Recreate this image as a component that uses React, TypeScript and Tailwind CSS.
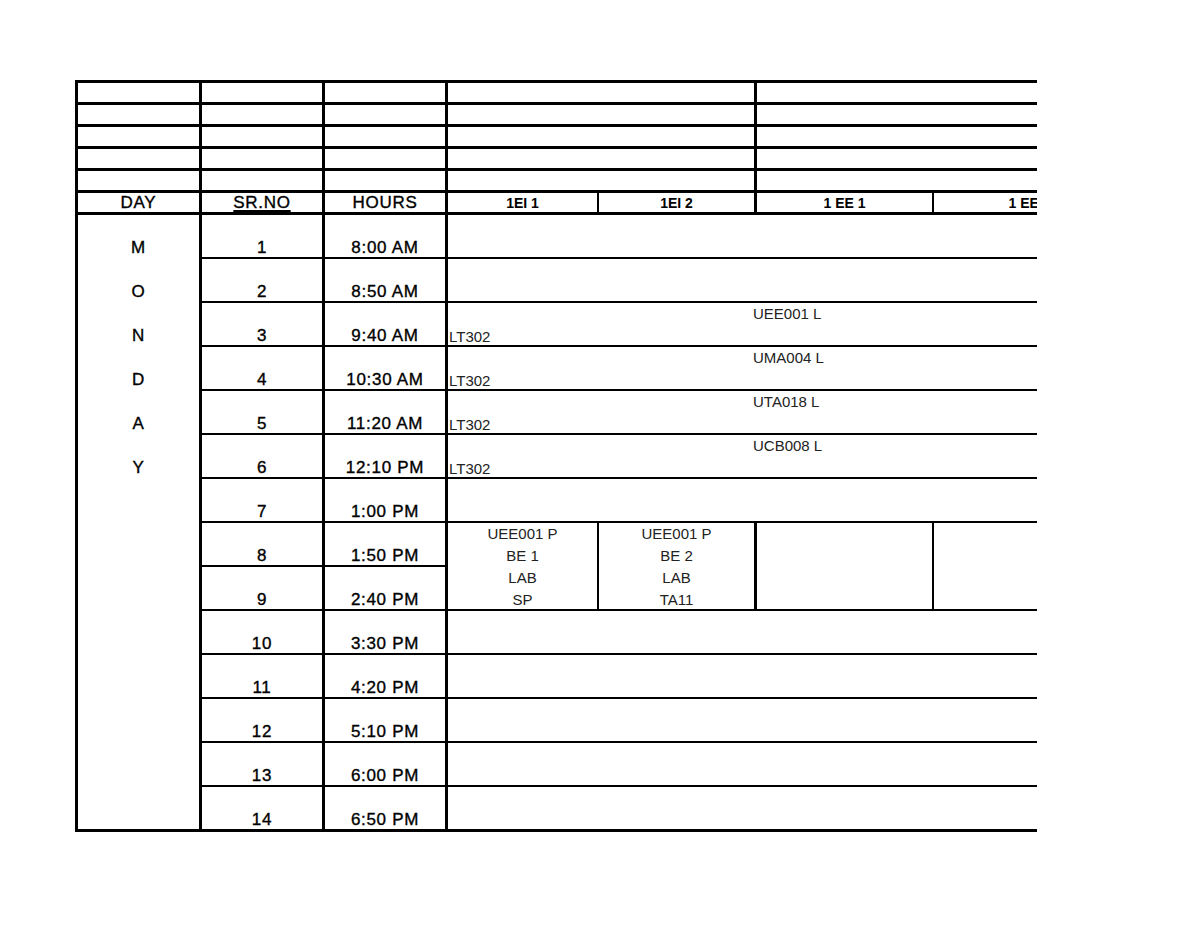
const font = "font-['Liberation_Sans',Arial,sans-serif]"

const slots = [
  { no: "1", time: "8:00 AM" },
  { no: "2", time: "8:50 AM" },
  { no: "3", time: "9:40 AM", course: "UEE001 L", room: "LT302" },
  { no: "4", time: "10:30 AM", course: "UMA004 L", room: "LT302" },
  { no: "5", time: "11:20 AM", course: "UTA018 L", room: "LT302" },
  { no: "6", time: "12:10 PM", course: "UCB008 L", room: "LT302" },
  { no: "7", time: "1:00 PM" },
  { no: "8", time: "1:50 PM", lab: true },
  { no: "9", time: "2:40 PM" },
  { no: "10", time: "3:30 PM" },
  { no: "11", time: "4:20 PM" },
  { no: "12", time: "5:10 PM" },
  { no: "13", time: "6:00 PM" },
  { no: "14", time: "6:50 PM" },
]

const labs = [
  ["UEE001 P", "BE 1", "LAB", "SP"],
  ["UEE001 P", "BE 2", "LAB", "TA11"],
  [],
  [],
]

// heavier, slightly wider look for the main sheet text
const strong = "tracking-[0.7px] [-webkit-text-stroke:0.35px_black]"

function LabCell({ lines, edge }: { lines: string[]; edge: string }) {
  return (
    <div className={`row-span-2 border-b-2 border-black ${edge} flex flex-col items-center text-[15px] leading-[22px] text-[#222]`}>
      {lines.map((l, i) => (
        <span key={i}>{l}</span>
      ))}
    </div>
  )
}

export default function App() {
  return (
    <div className={`min-h-[927px] w-[1200px] bg-white pt-[80px] pl-[75px] text-black ${font}`}>
      <div className="w-[962px] overflow-hidden">
        <div className="grid w-[1056px] grid-cols-[124px_123px_123px_151px_158px_177px_194px] grid-rows-[repeat(6,22px)_repeat(13,44px)_45px] border-l-[3px] border-t-[3px] border-black">
          {/* blank title rows */}
          {[0, 1, 2, 3, 4].map((r) => (
            <div key={r} className="contents">
              <div className="border-b-[3px] border-r-[3px] border-black" />
              <div className="border-b-[3px] border-r-[3px] border-black" />
              <div className="border-b-[3px] border-r-[3px] border-black" />
              <div className="col-span-2 border-b-[3px] border-r-[3px] border-black" />
              <div className="col-span-2 border-b-[3px] border-r-[3px] border-black" />
            </div>
          ))}

          {/* column heads */}
          <div className={`flex items-end justify-center border-b-[3px] border-r-[3px] border-black text-[17px] leading-[18px] ${strong}`}>DAY</div>
          <div className={`flex items-end justify-center border-b-[3px] border-r-[3px] border-black text-[17px] leading-[18px] ${strong}`}>
            <span className="underline decoration-2 underline-offset-[2px]">SR.NO</span>
          </div>
          <div className={`flex items-end justify-center border-b-[3px] border-r-[3px] border-black text-[17px] leading-[18px] ${strong}`}>HOURS</div>
          <div className="flex items-center justify-center border-b-[3px] border-r-2 border-black pt-[2px] text-[14px] font-bold">1EI 1</div>
          <div className="flex items-center justify-center border-b-[3px] border-r-[3px] border-black pt-[2px] text-[14px] font-bold">1EI 2</div>
          <div className="flex items-center justify-center border-b-[3px] border-r-2 border-black pt-[2px] text-[14px] font-bold">1 EE 1</div>
          <div className="flex items-center justify-center border-b-[3px] border-r-[3px] border-black pt-[2px] text-[14px] font-bold">1 EE 2</div>

          {slots.map((s, i) => {
            const last = i === slots.length - 1
            const bottom = last ? "border-b-[3px]" : "border-b-2"
            return (
              <div key={s.no} className="contents">
                {i === 0 && (
                  <div className="row-span-14 flex flex-col border-b-[3px] border-r-[3px] border-black">
                    {["M", "O", "N", "D", "A", "Y"].map((d) => (
                      <div key={d} className={`flex h-[44px] items-end justify-center pb-[1px] text-[17px] leading-[20px] ${strong}`}>
                        {d}
                      </div>
                    ))}
                  </div>
                )}
                <div className={`flex items-end justify-center ${bottom} border-r-[3px] border-black text-[17px] leading-[19px] ${strong}`}>
                  {s.no}
                </div>
                <div className={`flex items-end justify-center ${bottom} border-r-[3px] border-black text-[17px] leading-[19px] ${strong}`}>
                  {s.time}
                </div>
                {s.lab ? (
                  <>
                    <LabCell lines={labs[0]} edge="border-r-2" />
                    <LabCell lines={labs[1]} edge="border-r-[3px]" />
                    <LabCell lines={labs[2]} edge="border-r-2" />
                    <LabCell lines={labs[3]} edge="border-r-[3px]" />
                  </>
                ) : s.no === "9" ? null : (
                  <div className={`col-span-4 flex flex-col justify-between ${bottom} border-black text-[15px] leading-[17px] text-[#222]`}>
                    {s.course ? (
                      <>
                        <span className="pl-[305px] pt-[2px]">{s.course}</span>
                        <span className="pl-[1px]">{s.room}</span>
                      </>
                    ) : null}
                  </div>
                )}
              </div>
            )
          })}
        </div>
      </div>
    </div>
  )
}
